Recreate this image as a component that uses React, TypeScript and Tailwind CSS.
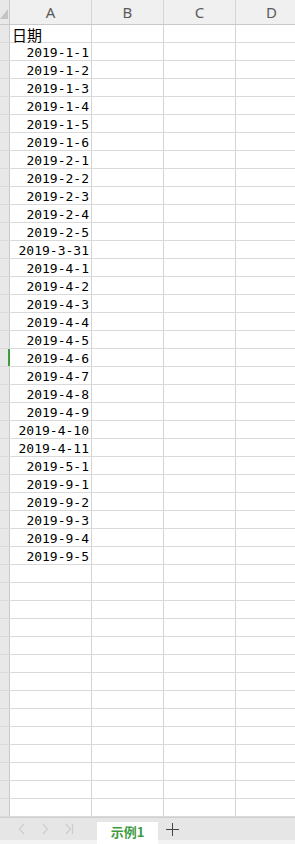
import React from "react";

const dates = [
  "2019-1-1", "2019-1-2", "2019-1-3", "2019-1-4", "2019-1-5", "2019-1-6",
  "2019-2-1", "2019-2-2", "2019-2-3", "2019-2-4", "2019-2-5",
  "2019-3-31",
  "2019-4-1", "2019-4-2", "2019-4-3", "2019-4-4", "2019-4-5", "2019-4-6",
  "2019-4-7", "2019-4-8", "2019-4-9", "2019-4-10", "2019-4-11",
  "2019-5-1",
  "2019-9-1", "2019-9-2", "2019-9-3", "2019-9-4", "2019-9-5",
];

const ROWS = 45;

function HeaderCell({ label, w }: { label: string; w: string }) {
  return (
    <div
      className={`${w} shrink-0 h-full flex items-center justify-center border-r border-[#d4d4d4] text-[15px] text-[#5a5a5a]`}
      style={{ fontFamily: '"Noto Sans", "Liberation Sans", sans-serif' }}
    >
      {label}
    </div>
  );
}

export default function App() {
  const rows = Array.from({ length: ROWS }, (_, i) => i);

  return (
    <div className="w-[295px] h-[844px] flex flex-col bg-white overflow-hidden select-none">
      {/* column header */}
      <div className="h-[25px] shrink-0 flex bg-[#f0f0f0] border-b border-[#c9c9c9]">
        <div className="w-[10px] shrink-0 h-full relative bg-[#e8e8e8] border-r border-[#c9c9c9]">
          <svg className="absolute left-0 top-[9px]" width="8" height="10" viewBox="0 0 8 10">
            <polygon points="8,0 8,10 0,10" fill="#c4c4c4" />
          </svg>
        </div>
        <HeaderCell label="A" w="w-[82px]" />
        <HeaderCell label="B" w="w-[72px]" />
        <HeaderCell label="C" w="w-[72px]" />
        <HeaderCell label="D" w="w-[72px]" />
      </div>

      {/* grid body */}
      <div className="flex-1 overflow-hidden">
        {rows.map((i) => {
          const text = i === 0 ? "日期" : dates[i - 1] ?? "";
          const active = i === 18;
          return (
            <div key={i} className="h-[18px] flex border-b border-[#dadada]">
              <div
                className={`w-[10px] shrink-0 h-full bg-[#e8e8e8] border-r ${
                  active ? "border-r-2 border-[#3f9b3f]" : "border-[#c9c9c9]"
                }`}
              />
              <div
                className={`w-[82px] shrink-0 h-full flex items-center pt-[2px] border-r border-[#d4d4d4] text-black ${
                  i === 0 ? "justify-start pl-[2px]" : "justify-end pr-[2px]"
                }`}
              >
                {i === 0 ? (
                  <span
                    className="text-[15px] leading-[16px]"
                    style={{ fontFamily: '"Noto Sans CJK SC", sans-serif' }}
                  >
                    {text}
                  </span>
                ) : (
                  <span
                    className="text-[13px] leading-[15px]"
                    style={{ fontFamily: '"DejaVu Sans Mono", monospace' }}
                  >
                    {text}
                  </span>
                )}
              </div>
              <div className="w-[72px] shrink-0 h-full border-r border-[#d4d4d4]" />
              <div className="w-[72px] shrink-0 h-full border-r border-[#d4d4d4]" />
              <div className="w-[72px] shrink-0 h-full" />
            </div>
          );
        })}
      </div>

      {/* sheet tab bar */}
      <div className="h-[27px] shrink-0 flex flex-col border-t border-[#cfcfcf]">
        <div className="flex-1 flex bg-[#e6e6e6]">
          <div className="w-[97px] shrink-0 flex items-center pl-[18px] gap-[15px]">
            <svg width="8" height="12" viewBox="0 0 8 12">
              <polyline points="6,1 1.5,6 6,11" fill="none" stroke="#cdcdcd" strokeWidth="1.2" />
            </svg>
            <svg width="8" height="12" viewBox="0 0 8 12">
              <polyline points="2,1 6.5,6 2,11" fill="none" stroke="#cdcdcd" strokeWidth="1.2" />
            </svg>
            <svg width="10" height="12" viewBox="0 0 10 12">
              <polyline points="2,1 6.5,6 2,11" fill="none" stroke="#cdcdcd" strokeWidth="1.2" />
              <line x1="8.5" y1="1" x2="8.5" y2="11" stroke="#cdcdcd" strokeWidth="1.2" />
            </svg>
          </div>
          <div className="w-[61px] shrink-0 mt-[4px] bg-white flex items-center justify-center">
            <span
              className="text-[13px] font-bold text-[#3f9b3f] leading-none"
              style={{ fontFamily: '"Noto Sans CJK SC", sans-serif' }}
            >
              示例1
            </span>
          </div>
          <div className="flex items-center pl-[8px]">
            <svg width="13" height="13" viewBox="0 0 13 13">
              <line x1="6.5" y1="0" x2="6.5" y2="13" stroke="#444" strokeWidth="1" />
              <line x1="0" y1="6.5" x2="13" y2="6.5" stroke="#444" strokeWidth="1" />
            </svg>
          </div>
        </div>
        <div className="h-[4px] flex bg-[#f3f3f3]">
          <div className="w-[97px]" />
          <div className="w-[61px] bg-white" />
        </div>
      </div>
    </div>
  );
}
